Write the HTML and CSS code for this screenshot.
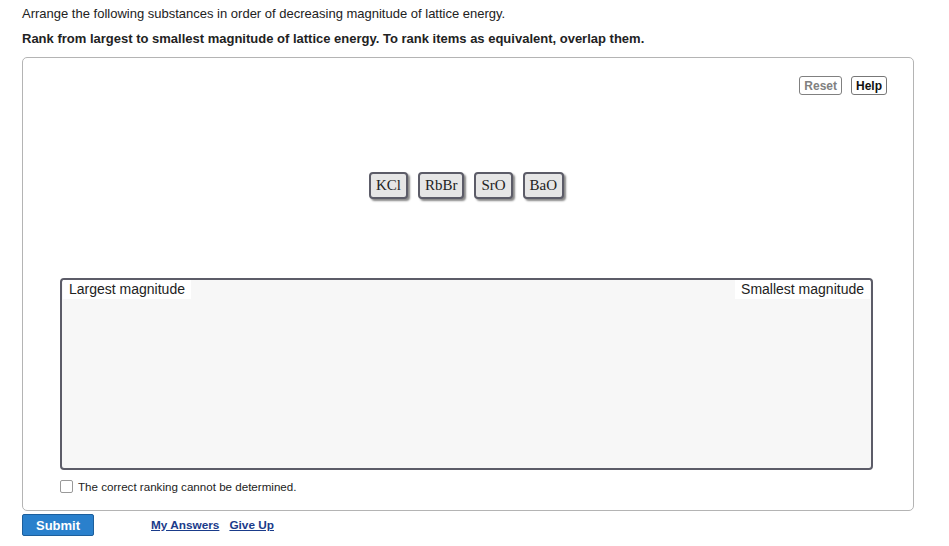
FILE: index.html
```html
<!DOCTYPE html>
<html lang="en">
<head>
    <meta charset="UTF-8">
    <title>Lattice Energy Ranking</title>
    <link rel="stylesheet" href="styles.css">
</head>
<body>
    <div class="page">
        <p class="prompt">Arrange the following substances in order of decreasing magnitude of lattice energy.</p>
        <p class="instructions">Rank from largest to smallest magnitude of lattice energy. To rank items as equivalent, overlap them.</p>

        <div class="panel">
            <div class="toolbar">
                <button class="tool-btn reset">Reset</button>
                <button class="tool-btn">Help</button>
            </div>

            <div class="tiles">
                <div class="tile">KCl</div>
                <div class="tile">RbBr</div>
                <div class="tile">SrO</div>
                <div class="tile">BaO</div>
            </div>

            <div class="rank-box">
                <div class="rank-labels">
                    <span class="rank-label">Largest magnitude</span>
                    <span class="rank-label">Smallest magnitude</span>
                </div>
            </div>

            <label class="undetermined">
                <span class="checkbox"></span>
                The correct ranking cannot be determined.
            </label>
        </div>

        <div class="actions">
            <button class="submit">Submit</button>
            <a href="#" class="link">My Answers</a>
            <a href="#" class="link">Give Up</a>
        </div>
    </div>
</body>
</html>
```

FILE: styles.css
```css
body {
    margin: 0;
    font-family: "Liberation Sans", Arial, sans-serif;
    color: #222;
    background: #fff;
}
.page {
    width: 892px;
    padding: 6px 0 0 22px;
}
.prompt {
    font-size: 13px;
    margin: 0;
    line-height: 15px;
}
.instructions {
    font-size: 13px;
    font-weight: bold;
    margin: 10px 0 0;
    line-height: 15px;
}
.panel {
    margin-top: 11px;
    height: 454px;
    border: 1px solid #b4b4b4;
    border-radius: 5px;
    box-sizing: border-box;
    padding: 18px 26px 0 37px;
}
.toolbar {
    display: flex;
    justify-content: flex-end;
    gap: 9px;
}
.tool-btn {
    font-family: "Liberation Sans", Arial, sans-serif;
    font-size: 12px;
    font-weight: bold;
    color: #111;
    background: #fff;
    border: 1px solid #777;
    border-radius: 3px;
    height: 19px;
    padding: 0 4px;
    line-height: 16px;
}
.tool-btn.reset {
    color: #808080;
    border-color: #808080;
}
.tiles {
    display: flex;
    justify-content: center;
    gap: 10px;
    margin: 77px 14px 0 0;
}
.tile {
    font-family: "Liberation Serif", "Times New Roman", serif;
    font-size: 15px;
    color: #222;
    background: #e6e6e6;
    border: 2px solid #5c5c68;
    border-radius: 4px;
    height: 23px;
    line-height: 23px;
    padding: 0 5px;
    box-shadow: 2px 2px 2px #888;
}
.rank-box {
    margin: 79px 14px 0 0;
    height: 192px;
    box-sizing: border-box;
    border: 2px solid #5c5c68;
    border-radius: 4px;
    background: #f7f7f7;
}
.rank-labels {
    display: flex;
    justify-content: space-between;
    padding: 0 1px;
}
.rank-label {
    background: #fff;
    font-size: 14px;
    line-height: 18px;
    padding: 0 6px 1px;
    color: #222;
}
.undetermined {
    display: flex;
    align-items: center;
    gap: 5px;
    margin-top: 10px;
    font-size: 11.6px;
    color: #222;
}
.checkbox {
    width: 11px;
    height: 11px;
    border: 1px solid #999;
    border-radius: 2px;
    background: #fff;
}
.actions {
    display: flex;
    align-items: center;
    margin-top: 3px;
}
.submit {
    font-family: "Liberation Sans", Arial, sans-serif;
    font-size: 13px;
    font-weight: bold;
    color: #fff;
    background: #2a80cc;
    border: 1px solid #1d5f9c;
    border-radius: 2px;
    width: 72px;
    height: 22px;
    margin-right: 57px;
}
.link {
    font-size: 11.8px;
    font-weight: bold;
    color: #1a3b8a;
    margin-right: 10px;
}
```
